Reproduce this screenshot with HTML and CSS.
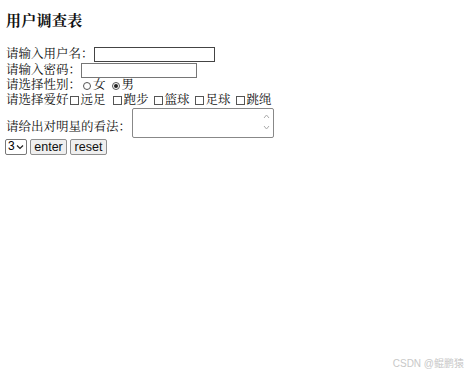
FILE: index.html
```html
<!DOCTYPE html>
<html lang="zh">
<head>
<meta charset="utf-8">
<link rel="stylesheet" href="styles.css">
</head>
<body>
<form class="survey">
  <h3 class="title">用户调查表</h3>
  <div class="row r1">请输入用户名：<input class="txt user" type="text"></div>
  <div class="row r2">请输入密码：<input class="txt pwd" type="password"></div>
  <div class="row">请选择性别：<input class="radio" type="radio" name="s">女<input class="radio r-m" type="radio" name="s" checked>男</div>
  <div class="row">请选择爱好<input class="chk first" type="checkbox">远足<input class="chk second" type="checkbox">跑步<input class="chk" type="checkbox">篮球<input class="chk" type="checkbox">足球<input class="chk" type="checkbox">跳绳</div>
  <div class="row area-row"><span class="area-label">请给出对明星的看法：</span><span class="area"><span class="spin"><svg width="7" height="18" viewBox="0 0 7 18"><path d="M1 5 L3.5 2 L6 5" fill="none" stroke="#aaa" stroke-width="1"/><path d="M1 13 L3.5 16 L6 13" fill="none" stroke="#aaa" stroke-width="1"/></svg></span></span></div>
  <div class="row btns">
    <span class="sel">3<svg width="8" height="6" viewBox="0 0 8 6"><path d="M1 1.5 L4 4.5 L7 1.5" fill="none" stroke="#222" stroke-width="1.2"/></svg></span>
    <button type="button" class="btn enter">enter</button>
    <button type="button" class="btn reset">reset</button>
  </div>
</form>
<div class="mark">CSDN @鲲鹏猿</div>
</body>
</html>
```
FILE: styles.css
```css
html, body { margin: 0; padding: 0; background: #fff; }
body {
  width: 474px; height: 373px; position: relative; overflow: hidden;
  font-family: "Liberation Serif", "Noto Serif CJK SC", "Noto Sans CJK SC", serif;
  color: #111;
}
.survey { padding: 0 0 0 6px; }
.title {
  margin: 0; padding-top: 12px; height: 31px;
  font-size: 15px; font-weight: bold; line-height: 18px; letter-spacing: 0.3px;
}
.row {
  font-size: 12.5px; line-height: 15px; height: 15px;
  display: flex; align-items: center; white-space: nowrap;
}
.r1 { height: 17px; margin-top: 3px; }
.txt {
  box-sizing: border-box; height: 15px; margin: 0; padding: 0;
  border: 1px solid #767676; outline: none; background: #fff;
}
.user { width: 121px; border-color: #444; }
.pwd { width: 116px; }
.radio, .chk {
  -webkit-appearance: none; appearance: none; box-sizing: border-box;
  margin: 0 2px 0 2px; padding: 0; background: #fff;
}
.radio {
  width: 8px; height: 8px; border-radius: 50%; border: 1px solid #555;
  position: relative;
}
.r-m { margin-left: 6px; }
.radio:checked::after {
  content: ""; position: absolute; left: 1px; top: 1px;
  width: 4px; height: 4px; border-radius: 50%; background: #222;
}
.chk { width: 9px; height: 9px; border: 1px solid #555; margin-left: 5px; }
.chk.first { margin-left: 1px; }
.chk.second { margin-left: 7px; }
.area-row { height: 30px; align-items: flex-end; margin-top: 0; }
.area-label { margin-bottom: 3px; }
.area {
  box-sizing: border-box; width: 142px; height: 30px; margin-left: 1px;
  border: 1px solid #888; border-radius: 2px; position: relative; display: inline-block;
}
.spin { position: absolute; right: 3px; top: 4px; }
.btns { height: 17px; margin-top: 0; gap: 3px; }
.sel {
  box-sizing: border-box; height: 16px; width: 22px; margin-left: -1px;
  border: 1px solid #777; border-radius: 2px; font-family: "Liberation Sans", Arial, sans-serif;
  font-size: 12px; display: inline-flex; align-items: center; justify-content: space-between;
  padding: 0 2px 0 2px; color: #000;
}
.btn {
  box-sizing: border-box; height: 16px; margin: 0; padding: 0;
  border: 1px solid #8f8f8f; border-radius: 2px; background: #efefef;
  font-family: "Liberation Sans", Arial, sans-serif; font-size: 12.5px; color: #111;
  line-height: 14px;
}
.enter { width: 37px; }
.reset { width: 37px; }
.mark {
  position: absolute; right: 10px; top: 355px;
  font-family: "Liberation Sans", "Noto Sans CJK SC", sans-serif;
  font-size: 10px; color: #c8c8c8;
}
```
